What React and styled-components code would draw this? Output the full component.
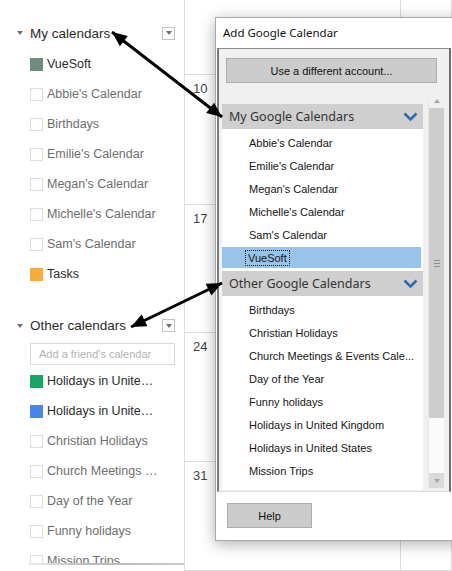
import React from 'react';
import styled, { createGlobalStyle } from 'styled-components';

const GlobalStyle = createGlobalStyle`
  html, body {
    margin: 0;
    padding: 0;
    background: #fff;
    overflow: hidden;
  }
  body {
    font-family: Arial, "Liberation Sans", sans-serif;
  }
`;

const Page = styled.div`
  position: relative;
  display: flex;
  width: 452px;
  height: 571px;
  overflow: hidden;
`;

/* ---------- left sidebar ---------- */

const Sidebar = styled.aside`
  width: 184px;
  flex-shrink: 0;
  border-right: 1px solid #dedede;
  display: flex;
  flex-direction: column;
`;

const SidebarScroll = styled.div`
  height: 563px;
  box-sizing: border-box;
  padding-top: 17px;
  overflow: hidden;
`;

const ScrollEdge = styled.div`
  height: 2px;
  margin-left: 28px;
  background: linear-gradient(to right, rgba(170, 170, 170, 0.2), #b9b9b9 40%, #c9c9c9);
`;

const SectionHeader = styled.div`
  display: flex;
  align-items: center;
  height: ${p => (p.$gap ? '31px' : '32px')};
  padding: 0 9px 0 17px;
  margin-top: ${p => (p.$gap ? '21px' : '0')};
`;

const Caret = styled.span`
  width: 0;
  height: 0;
  border-left: 3.5px solid transparent;
  border-right: 3.5px solid transparent;
  border-top: 4px solid #6f6f6f;
  margin-right: 7px;
`;

const SectionTitle = styled.span`
  flex: 1;
  font-size: 13.5px;
  color: #2b2b2b;
`;

const MenuBox = styled.span`
  width: 13px;
  height: 13px;
  box-sizing: border-box;
  border: 1px solid #c4c4c4;
  display: flex;
  align-items: center;
  justify-content: center;
  &::after {
    content: '';
    border-left: 3.5px solid transparent;
    border-right: 3.5px solid transparent;
    border-top: 4px solid #6f6f6f;
  }
`;

const CalRow = styled.div`
  display: flex;
  align-items: center;
  height: 30px;
  padding-left: 30px;
`;

const Swatch = styled.span`
  width: 13px;
  height: 13px;
  box-sizing: border-box;
  flex-shrink: 0;
  margin-right: 4px;
  background: ${p => p.$color || '#fff'};
  border: ${p => (p.$color ? 'none' : '1px solid #dcdcdc')};
`;

const CalName = styled.span`
  font-size: 12.5px;
  white-space: nowrap;
  color: ${p => (p.$on ? '#2b2b2b' : '#6e6e6e')};
`;

const FriendInput = styled.input`
  display: block;
  width: 145px;
  height: 22px;
  box-sizing: border-box;
  margin: 2px 0 1px 30px;
  padding: 0 0 0 8px;
  border: 1px solid #d9d9d9;
  font-family: Arial, "Liberation Sans", sans-serif;
  font-size: 11px;
  outline: none;
  &::placeholder {
    color: #b3b3b3;
  }
`;

/* ---------- month grid ---------- */

const Month = styled.div`
  flex: 1;
  display: grid;
  grid-template-columns: 216px 1fr;
  grid-template-rows: 75px 130px 128px 129px 1fr;
`;

const DayCell = styled.div`
  box-sizing: border-box;
  border-right: 1px solid #dcdcdc;
  border-bottom: 1px solid #dcdcdc;
  padding: 6px 0 0 8px;
  font-size: 13px;
  color: #444;
`;

/* ---------- dialog ---------- */

const Dialog = styled.div`
  position: absolute;
  left: 215px;
  top: 17px;
  width: 252px;
  height: 524px;
  box-sizing: border-box;
  background: #fff;
  border: 1px solid #a8a8a8;
  box-shadow: 0 3px 14px rgba(0, 0, 0, 0.32);
  font-family: "Liberation Sans", Arial, sans-serif;
`;

const DialogTitle = styled.div`
  height: 30px;
  line-height: 30px;
  padding-left: 7px;
  font-family: "Noto Sans", sans-serif;
  font-size: 11.5px;
  color: #111;
`;

const Panel = styled.div`
  margin-left: 1px;
  width: 234px;
  height: 444px;
  box-sizing: border-box;
  background: #f0f0f0;
  border-top: 1px solid #8c8c8c;
  border-left: 2px solid #7a7a7a;
  border-right: 2px solid #6c6c6c;
  border-bottom: 1px solid #dcdcdc;
  display: flex;
  flex-direction: column;
`;

const GrayButton = styled.div`
  box-sizing: border-box;
  width: ${p => p.$width}px;
  height: 25px;
  background: #cccccc;
  border: 1px solid #adadad;
  display: flex;
  align-items: center;
  justify-content: center;
  font-size: 11px;
  color: #111;
`;

const AccountRow = styled.div`
  padding: 9px 0 0 7px;
`;

const ListBox = styled.div`
  display: flex;
  margin-top: 9px;
  height: 398px;
  padding-left: 3px;
`;

const List = styled.div`
  width: 201px;
  padding-top: 12px;
  overflow: hidden;
`;

const GroupHeader = styled.div`
  display: flex;
  align-items: center;
  justify-content: space-between;
  height: 25px;
  padding: 0 5px 0 7px;
  background: #cfcfcf;
  font-family: "Noto Sans", sans-serif;
  font-size: 12.5px;
  color: #333;
`;

const GroupBody = styled.div`
  background: #fff;
  padding: ${p => (p.$tail ? '2px 0 20px' : '2px 0')};
`;

const ListItem = styled.div`
  display: flex;
  align-items: center;
  height: ${p => (p.$selected ? '21px' : '23px')};
  margin: ${p => (p.$selected ? '1px 2px 1px 0' : '0')};
  padding-left: ${p => (p.$selected ? '24px' : '27px')};
  background: ${p => (p.$selected ? '#99c4ea' : 'transparent')};
  font-size: 11px;
  color: #151515;
  white-space: nowrap;
`;

const FocusText = styled.span`
  outline: 1px dotted #222;
  padding: 0 2px;
  line-height: 14px;
`;

const Scrollbar = styled.div`
  width: 16px;
  height: 395px;
  margin: 1px 0 0 5px;
  display: flex;
  flex-direction: column;
  background: #fbfbfb;
  border-left: 1px solid #e8e8e8;
  box-sizing: border-box;
`;

const ScrollArrow = styled.div`
  height: 15px;
  display: flex;
  align-items: center;
  justify-content: center;
  background: ${p => (p.$down ? '#dadada' : '#f0f0f0')};
  &::after {
    content: '';
    border-left: 3.5px solid transparent;
    border-right: 3.5px solid transparent;
    ${p => (p.$down ? 'border-top' : 'border-bottom')}: 4px solid #a6a6a6;
  }
`;

const Thumb = styled.div`
  height: 310px;
  background: #cdcdcd;
  display: flex;
  align-items: center;
  justify-content: center;
  &::after {
    content: '';
    width: 6px;
    height: 5px;
    border-top: 1px solid #8e8e8e;
    border-bottom: 1px solid #8e8e8e;
    background: linear-gradient(#8e8e8e, #8e8e8e) center / 100% 1px no-repeat;
  }
`;

const Track = styled.div`
  flex: 1;
`;

const Footer = styled.div`
  padding: 11px 0 0 11px;
`;

const Chevron = () => (
  <svg width="15" height="10" viewBox="0 0 15 10">
    <path d="M1.5 1.5 L7.5 7.5 L13.5 1.5" fill="none" stroke="#2b6cb5" strokeWidth="2.6" />
  </svg>
);

/* ---------- annotation arrows ---------- */

const Overlay = styled.svg`
  position: absolute;
  left: 0;
  top: 0;
  pointer-events: none;
`;

const head = (x1, y1, x2, y2, len = 15, half = 6.5) => {
  const a = Math.atan2(y2 - y1, x2 - x1);
  const bx = x2 - len * Math.cos(a);
  const by = y2 - len * Math.sin(a);
  const px = -Math.sin(a) * half;
  const py = Math.cos(a) * half;
  return `${x2},${y2} ${bx + px},${by + py} ${bx - px},${by - py}`;
};

const DoubleArrow = ({ from, to }) => {
  const [x1, y1] = from;
  const [x2, y2] = to;
  return (
    <g>
      <line x1={x1} y1={y1} x2={x2} y2={y2} stroke="#000" strokeWidth="3" />
      <polygon points={head(x1, y1, x2, y2)} fill="#000" />
      <polygon points={head(x2, y2, x1, y1)} fill="#000" />
    </g>
  );
};

const myCalendars = [
  { name: 'VueSoft', color: '#6f8d7f' },
  { name: "Abbie's Calendar" },
  { name: 'Birthdays' },
  { name: "Emilie's Calendar" },
  { name: "Megan's Calendar" },
  { name: "Michelle's Calendar" },
  { name: "Sam's Calendar" },
  { name: 'Tasks', color: '#fbab3e' }
];

const otherCalendars = [
  { name: 'Holidays in Unite…', color: '#16a765' },
  { name: 'Holidays in Unite…', color: '#4986e7' },
  { name: 'Christian Holidays' },
  { name: 'Church Meetings …' },
  { name: 'Day of the Year' },
  { name: 'Funny holidays' },
  { name: 'Mission Trips' }
];

const googleMine = [
  "Abbie's Calendar",
  "Emilie's Calendar",
  "Megan's Calendar",
  "Michelle's Calendar",
  "Sam's Calendar",
  'VueSoft'
];

const googleOther = [
  'Birthdays',
  'Christian Holidays',
  'Church Meetings & Events Cale...',
  'Day of the Year',
  'Funny holidays',
  'Holidays in United Kingdom',
  'Holidays in United States',
  'Mission Trips'
];

const weeks = ['', '10', '17', '24', '31'];

const CalendarList = ({ items }) =>
  items.map((cal, i) => (
    <CalRow key={i}>
      <Swatch $color={cal.color} />
      <CalName $on={!!cal.color}>{cal.name}</CalName>
    </CalRow>
  ));

export default function App() {
  return (
    <>
      <GlobalStyle />
      <Page>
        <Sidebar>
          <SidebarScroll>
            <SectionHeader>
              <Caret />
              <SectionTitle>My calendars</SectionTitle>
              <MenuBox />
            </SectionHeader>
            <CalendarList items={myCalendars} />
            <SectionHeader $gap>
              <Caret />
              <SectionTitle>Other calendars</SectionTitle>
              <MenuBox />
            </SectionHeader>
            <FriendInput placeholder="Add a friend's calendar" readOnly />
            <CalendarList items={otherCalendars} />
          </SidebarScroll>
          <ScrollEdge />
        </Sidebar>

        <Month>
          {weeks.map((day, i) => (
            <React.Fragment key={i}>
              <DayCell>{day}</DayCell>
              <DayCell />
            </React.Fragment>
          ))}
        </Month>

        <Dialog>
          <DialogTitle>Add Google Calendar</DialogTitle>
          <Panel>
            <AccountRow>
              <GrayButton $width={211}>Use a different account...</GrayButton>
            </AccountRow>
            <ListBox>
              <List>
                <GroupHeader>
                  My Google Calendars
                  <Chevron />
                </GroupHeader>
                <GroupBody>
                  {googleMine.map(name =>
                    name === 'VueSoft' ? (
                      <ListItem key={name} $selected>
                        <FocusText>{name}</FocusText>
                      </ListItem>
                    ) : (
                      <ListItem key={name}>{name}</ListItem>
                    )
                  )}
                </GroupBody>
                <GroupHeader>
                  Other Google Calendars
                  <Chevron />
                </GroupHeader>
                <GroupBody $tail>
                  {googleOther.map(name => (
                    <ListItem key={name}>{name}</ListItem>
                  ))}
                </GroupBody>
              </List>
              <Scrollbar>
                <ScrollArrow />
                <Thumb />
                <Track />
                <ScrollArrow $down />
              </Scrollbar>
            </ListBox>
          </Panel>
          <Footer>
            <GrayButton $width={85}>Help</GrayButton>
          </Footer>
        </Dialog>

        <Overlay width="452" height="571">
          <DoubleArrow from={[112, 32]} to={[222, 117]} />
          <DoubleArrow from={[222, 283]} to={[131, 327]} />
        </Overlay>
      </Page>
    </>
  );
}
